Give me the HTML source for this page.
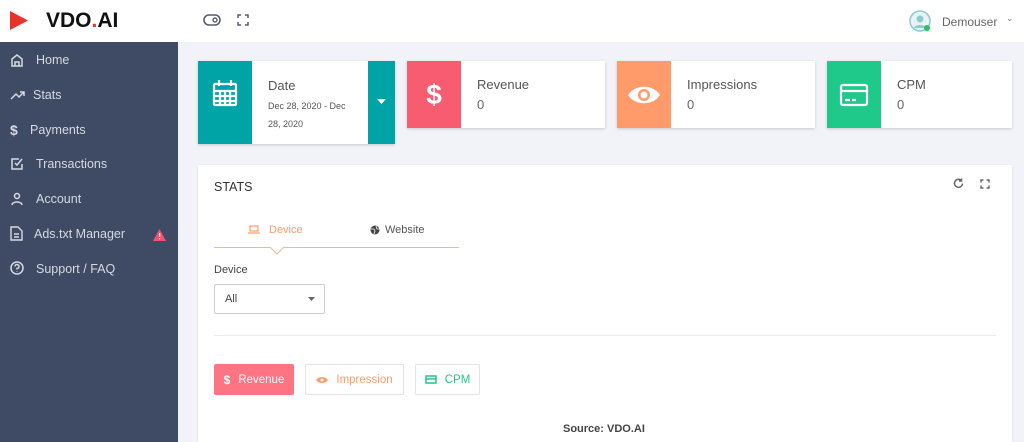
<!DOCTYPE html>
<html style="width:1024px;height:442px;overflow:hidden"><head><style>
*{box-sizing:border-box;margin:0;padding:0}
body{width:1024px;height:442px;overflow:hidden;background:#f2f3f8;font-family:"Liberation Sans",sans-serif;position:relative;color:#575962}
.hdr{position:absolute;left:0;top:0;width:1024px;height:42px;background:#fff}
.side{position:absolute;left:0;top:42px;width:178px;height:400px;background:#3f4b64;color:#d5d9e2;font-size:12.5px}
.side div{position:absolute;left:0;height:20px;display:flex;align-items:center}
.side svg{position:absolute;left:10px}
.card{position:absolute;top:61px;height:67px;background:#fff;box-shadow:0 1px 3px rgba(0,0,0,.18)}
.card .ic{position:absolute;left:0;top:0;width:54px;height:100%;display:flex;align-items:center;justify-content:center}
.card .t{position:absolute;left:70px;top:16px;font-size:13px;color:#555}
.card .v{position:absolute;left:70px;top:36px;font-size:13px;color:#666}
.btn{position:absolute;top:364px;height:31px;border:1px solid #e3e3e3;border-radius:2px;font-size:11.5px;display:flex;align-items:center;justify-content:center;gap:8px}
</style></head><body>
<div class="hdr">
<svg style="position:absolute;left:10px;top:11px" width="18" height="19"><polygon points="0,0 18,9.5 0,19" fill="#e8322c"/></svg>
<div style="position:absolute;left:46px;top:9px;font-size:21px;font-weight:bold;color:#111">VDO<span style="color:#e8322c">.</span>AI</div>
<svg style="position:absolute;left:203px;top:14px" width="18" height="12"><rect x="1" y="1" width="16" height="10" rx="5" fill="none" stroke="#555c70" stroke-width="1.6"/><circle cx="12" cy="6" r="2" fill="none" stroke="#555c70" stroke-width="1.4"/></svg>
<svg style="position:absolute;left:237px;top:14px" width="12" height="12" fill="none" stroke="#555c70" stroke-width="1.5"><path d="M1 4V1h3M8 1h3v3M11 8v3H8M4 11H1V8"/></svg>
<svg style="position:absolute;left:909px;top:10px" width="23" height="23"><circle cx="11" cy="11" r="10" fill="#eaf3f4" stroke="#8ccbd0" stroke-width="1.5"/><circle cx="11" cy="9" r="3.5" fill="#8ccbd0"/><path d="M5 18c1-4 11-4 12 0" fill="#8ccbd0"/><circle cx="18" cy="18" r="3" fill="#22c55e"/></svg>
<div style="position:absolute;left:942px;top:15px;font-size:12px;color:#666">Demouser</div>
<div style="position:absolute;left:1006px;top:13px;font-size:9px;color:#777">⌄</div>
</div>
<div class="side">
<div style="top:8px;left:36px">Home</div>
<svg style="top:12px" width="14" height="13" fill="none" stroke="#d5d9e2" stroke-width="1.5"><path d="M2 12V5l5-4 5 4v7zM5 12V8h4v4"/></svg>
<div style="top:43px;left:33px">Stats</div>
<svg style="top:47px" width="16" height="12" fill="none" stroke="#d5d9e2" stroke-width="1.5"><path d="M1 10l5-5 3 3 5-5M10 3h4v4"/></svg>
<div style="top:78px;left:30px">Payments</div>
<div style="top:78px;left:10px;font-weight:bold;font-size:14px">$</div>
<div style="top:112px;left:36px">Transactions</div>
<svg style="top:115px" width="14" height="14" fill="none" stroke="#d5d9e2" stroke-width="1.5"><path d="M12 7v5H2V2h7M5 6l2 2 5-6"/></svg>
<div style="top:147px;left:36px">Account</div>
<svg style="top:150px" width="14" height="14" fill="none" stroke="#d5d9e2" stroke-width="1.5"><circle cx="7" cy="4" r="2.5"/><path d="M2 13c0-4 10-4 10 0"/></svg>
<div style="top:182px;left:34px">Ads.txt Manager</div>
<svg style="top:184px" width="13" height="15" fill="none" stroke="#d5d9e2" stroke-width="1.4"><path d="M1 1h7l4 4v9H1zM4 8h5M4 11h5"/></svg>
<svg style="position:absolute;left:153px;top:187px" width="13" height="12"><polygon points="6.5,0 13,12 0,12" fill="#f4516c"/><rect x="6" y="4" width="1.2" height="4" fill="#fff"/><rect x="6" y="9" width="1.2" height="1.3" fill="#fff"/></svg>
<div style="top:217px;left:36px">Support / FAQ</div>
<svg style="top:219px" width="14" height="14" fill="none" stroke="#d5d9e2" stroke-width="1.5"><circle cx="7" cy="7" r="6"/><path d="M5 5.5a2 2 0 1 1 2 2v1M7 10.3v.5"/></svg>
</div>

<div class="card" style="left:198px;width:197px;height:83px">
<div class="ic" style="background:#00a4a6;width:54px;align-items:flex-start;padding-top:18px"><svg width="26" height="28" fill="none" stroke="#fff" stroke-width="2.2"><rect x="2" y="5" width="22" height="21" rx="1"/><path d="M7 1v6M19 1v6M2 12h22M2 17h22M2 22h22M8 12v14M13 12v14M18 12v14"/></svg></div>
<div class="t" style="top:17px">Date</div>
<div style="position:absolute;left:70px;top:36px;font-size:9px;color:#555;line-height:18px;width:90px">Dec 28, 2020 - Dec 28, 2020</div>
<div style="position:absolute;right:0;top:0;width:27px;height:100%;background:#00a4a6"><svg style="position:absolute;left:9px;top:38px" width="9" height="5"><polygon points="0,0 9,0 4.5,5" fill="#fff"/></svg></div>
</div>
<div class="card" style="left:407px;width:198px">
<div class="ic" style="background:#f75c70"><span style="color:#fff;font-size:28px;font-weight:bold">$</span></div>
<div class="t">Revenue</div><div class="v">0</div></div>
<div class="card" style="left:617px;width:198px">
<div class="ic" style="background:#ff9b6a"><svg width="34" height="22"><path d="M1 11C8 0 26 0 33 11 26 22 8 22 1 11z" fill="#fff"/><circle cx="17" cy="11" r="6" fill="#ff9b6a"/><circle cx="17" cy="11" r="3.5" fill="#fff"/></svg></div>
<div class="t">Impressions</div><div class="v">0</div></div>
<div class="card" style="left:827px;width:185px">
<div class="ic" style="background:#1fc98a"><svg width="30" height="24" fill="none" stroke="#fff" stroke-width="2.2"><rect x="2" y="2" width="26" height="20" rx="2"/><path d="M2 8h26M6 17h5M13 17h4"/></svg></div>
<div class="t">CPM</div><div class="v">0</div></div>

<div style="position:absolute;left:198px;top:165px;width:814px;height:277px;background:#fff;box-shadow:0 1px 3px rgba(0,0,0,.08)">
<div style="position:absolute;left:16px;top:15px;font-size:12.5px;color:#333">STATS</div>
<svg style="position:absolute;left:755px;top:13px" width="11" height="11" fill="none" stroke="#666" stroke-width="1.5"><path d="M9.5 5.5A4 4 0 1 1 8 2.2M8.5 0.5v2.5H6"/></svg>
<svg style="position:absolute;left:782px;top:14px" width="10" height="10" fill="none" stroke="#666" stroke-width="1.4"><path d="M1 3.5V1h2.5M6.5 1H9v2.5M9 6.5V9H6.5M3.5 9H1V6.5"/></svg>
<svg style="position:absolute;left:50px;top:60px" width="12" height="9" fill="none" stroke="#ff9b6a" stroke-width="1.2"><rect x="2" y="1" width="8" height="5"/><path d="M0 8h12"/></svg>
<div style="position:absolute;left:71px;top:59px;font-size:11px;color:#ff9b6a">Device</div>
<svg style="position:absolute;left:172px;top:60px" width="10" height="10"><circle cx="5" cy="5" r="4.5" fill="#444"/><path d="M1 4h3l1 2-1 3M6 1l1 3h2.5" stroke="#fff" stroke-width=".8" fill="none"/></svg>
<div style="position:absolute;left:187px;top:59px;font-size:11px;color:#555">Website</div>
<div style="position:absolute;left:16px;top:82px;width:245px;height:1px;background:#f3b796"></div>
<svg style="position:absolute;left:72px;top:82px" width="14" height="8"><path d="M0 0L7 7L14 0" fill="#fff" stroke="#f3b796"/></svg>
<div style="position:absolute;left:16px;top:99px;font-size:11px;color:#444">Device</div>
<div style="position:absolute;left:16px;top:119px;width:111px;height:30px;border:1px solid #ccc;border-radius:2px;font-size:11px;color:#444;padding:8px 10px">All<svg style="position:absolute;right:9px;top:12px" width="7" height="4"><polygon points="0,0 7,0 3.5,4" fill="#666"/></svg></div>
<div style="position:absolute;left:16px;top:170px;width:782px;height:1px;background:#ebedf2"></div>
<div style="position:absolute;left:365px;top:258px;font-size:11px;font-weight:bold;color:#444">Source: VDO.AI</div>
</div>
<div class="btn" style="left:214px;width:80px;background:#ff7482;border-color:#ff7482;color:#fff"><b style="font-size:12px">$</b>Revenue</div>
<div class="btn" style="left:305px;width:99px;background:#fff;color:#ff9b6a"><svg width="12" height="8"><path d="M0 4C3 0 9 0 12 4 9 8 3 8 0 4z" fill="#ff9b6a"/><circle cx="6" cy="4" r="1.5" fill="#fff"/></svg>Impression</div>
<div class="btn" style="left:415px;width:65px;background:#fff;color:#1fc98a"><svg width="12" height="9" fill="none" stroke="#1fc98a" stroke-width="1.5"><rect x="1" y="1" width="10" height="7"/><path d="M1 4h10"/></svg>CPM</div>
</body></html>
